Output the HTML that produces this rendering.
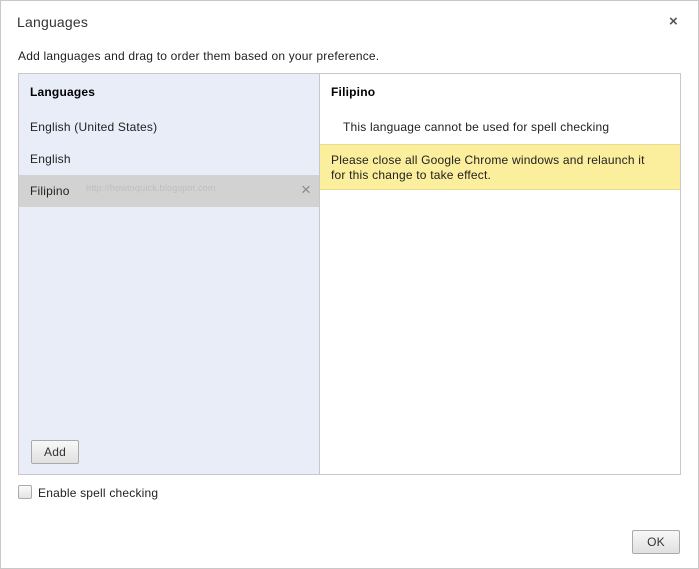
<!DOCTYPE html>
<html><head><style>
body{margin:0;width:699px;height:569px;background:#fff;font-family:"Liberation Sans",sans-serif;font-size:12px;color:#222;position:relative;overflow:hidden;letter-spacing:0.2px}
.frame{position:absolute;left:0;top:0;width:697px;height:567px;border:1px solid #c8c8c8}
.a{position:absolute;white-space:nowrap}
</style></head><body>
<div class="frame"></div>
<div class="a" style="left:17px;top:14px;font-size:14px;color:#333">Languages</div>
<div class="a" style="left:669px;top:13px;font-size:15px;color:#555;font-weight:bold">×</div>
<div class="a" style="left:18px;top:49px;color:#222">Add languages and drag to order them based on your preference.</div>
<div class="a" style="left:18px;top:73px;width:661px;height:400px;border:1px solid #c8c8c8;background:#fff"></div>
<div class="a" style="left:19px;top:74px;width:300px;height:400px;background:#e8edf8;border-right:1px solid #c8c8c8"></div>
<div class="a" style="left:30px;top:85px;font-weight:bold;color:#000">Languages</div>
<div class="a" style="left:30px;top:120px">English (United States)</div>
<div class="a" style="left:30px;top:152px">English</div>
<div class="a" style="left:19px;top:175px;width:300px;height:32px;background:#d2d2d2"></div>
<div class="a" style="left:30px;top:184px">Filipino</div>
<div class="a" style="left:86px;top:183px;font-size:9px;color:#bdbdbd">http://howtoquick.blogspot.com</div>
<div class="a" style="left:301px;top:180px;font-size:17px;color:#888">×</div>
<div class="a" style="left:331px;top:85px;font-weight:bold;color:#000">Filipino</div>
<div class="a" style="left:343px;top:120px">This language cannot be used for spell checking</div>
<div class="a" style="left:320px;top:144px;width:360px;height:44px;background:#fbee9c;border-top:1px solid #e8dc8c;border-bottom:1px solid #e8dc8c"></div>
<div class="a" style="left:331px;top:153px;line-height:15px">Please close all Google Chrome windows and relaunch it<br>for this change to take effect.</div>
<div class="a" style="left:31px;top:440px;width:46px;height:22px;border:1px solid #aaa;border-radius:2px;background:linear-gradient(#f8f8f8,#e0e0e0);text-align:center;line-height:22px;color:#333">Add</div>
<div class="a" style="left:18px;top:485px;width:12px;height:12px;border:1px solid #aaa;border-radius:2px;background:linear-gradient(#fafafa,#e4e4e4)"></div>
<div class="a" style="left:38px;top:486px">Enable spell checking</div>
<div class="a" style="left:632px;top:530px;width:46px;height:22px;border:1px solid #aaa;border-radius:2px;background:linear-gradient(#f8f8f8,#e0e0e0);text-align:center;line-height:22px;color:#333">OK</div>
</body></html>
